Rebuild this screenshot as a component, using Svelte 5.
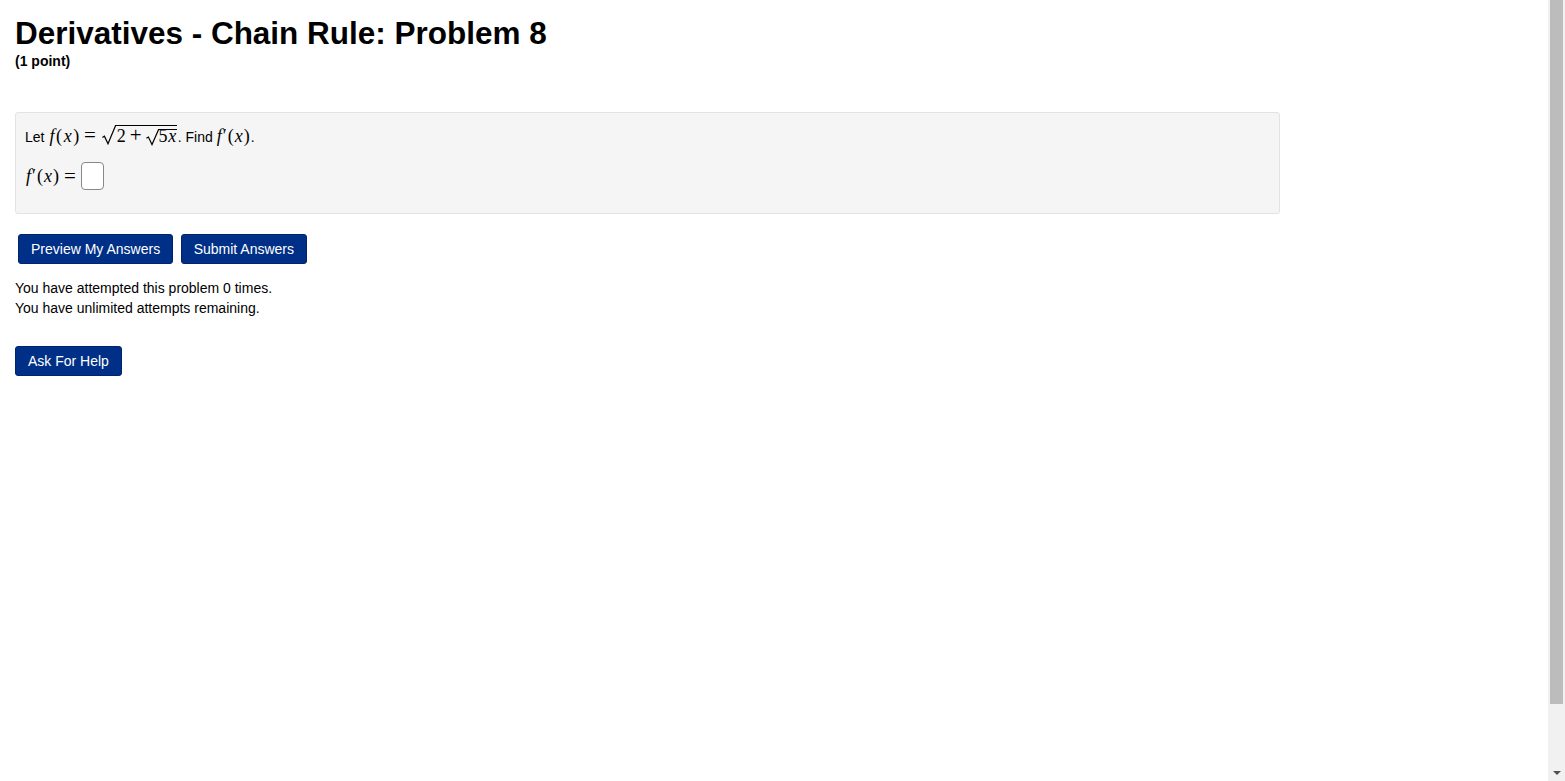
<script>
  const attempts = 0;
</script>

<div class="page">
  <h1>Derivatives - Chain Rule: Problem 8</h1>
  <div class="points">(1 point)</div>

  <div class="problem">
    <p class="line">
      <span class="word">Let</span><span class="math fx"><i>f</i>(<i>x</i>)</span><span class="math eq">=</span><span class="math root outer"><svg viewBox="0 0 15 21" class="radical"><path d="M0.4 12.4 L2.4 11.2 L6 18.8 L13.6 0.5 L15 0.5" fill="none" stroke="#000" stroke-width="1.2" /></svg><span class="under">2<span class="plus">+</span><span class="root inner"><svg viewBox="0 0 14 17" class="radical small"><path d="M0.4 9.2 L2.4 8 L6 15.6 L12.6 0.5 L14 0.5" fill="none" stroke="#000" stroke-width="1.2" /></svg><span class="under">5<i>x</i></span></span></span></span><span class="word find">. Find</span><span class="math fx prime"><i>f</i>′(<i>x</i>)</span><span class="word">.</span>
    </p>
    <div class="answer">
      <span class="math fx prime"><i>f</i>′(<i>x</i>)</span><span class="math eq tight">=</span>
      <input class="box" type="text" aria-label="answer" />
    </div>
  </div>

  <div class="actions">
    <button>Preview My Answers</button>
    <button class="submit">Submit Answers</button>
  </div>

  <div class="status">
    You have attempted this problem {attempts} times.<br />
    You have unlimited attempts remaining.
  </div>

  <button class="help">Ask For Help</button>
</div>

<div class="scrollbar">
  <div class="thumb"></div>
  <div class="arrow"></div>
</div>

<style>
  :global(body) {
    margin: 0;
    background: #fff;
    color: #000;
    font-family: "Liberation Sans", Arial, sans-serif;
    font-size: 14px;
    overflow: hidden;
  }
  .page {
    padding: 16px 0 0 15px;
    width: 1265px;
  }
  h1 {
    margin: 0;
    font-size: 31.48px;
    line-height: 36px;
    font-weight: bold;
  }
  .points {
    font-size: 14px;
    font-weight: bold;
    line-height: 16px;
    margin-top: 1px;
  }
  .problem {
    margin-top: 43px;
    height: 100px;
    background: #f5f5f5;
    border: 1px solid #e3e3e3;
    border-radius: 3px;
    padding: 0 0 0 9px;
  }
  .line {
    margin: 7px 0 0;
    height: 30px;
    line-height: 30px;
    display: flex;
    align-items: baseline;
    white-space: nowrap;
  }
  .word {
    font-size: 14px;
  }
  .find {
    margin-left: 1px;
  }
  .math {
    font-family: "Liberation Serif", "Times New Roman", serif;
    font-size: 18px;
  }
  .fx {
    margin-left: 5px;
    letter-spacing: 1.6px;
  }
  .prime {
    margin-left: 4px;
    letter-spacing: 1px;
  }
  .eq {
    font-size: 21px;
    margin: 0 6px 0 3px;
  }
  .eq.tight {
    margin: 0 5px 0 4px;
  }
  .plus {
    font-size: 21px;
    margin: 0 4px;
  }
  .root {
    display: inline-block;
    position: relative;
    padding-left: 15px;
    line-height: 19px;
  }
  .inner {
    padding-left: 13px;
    line-height: 12px;
  }
  .radical {
    position: absolute;
    left: 0;
    top: 0;
    width: 15px;
    height: 21px;
  }
  .radical.small {
    width: 14px;
    height: 17px;
  }
  .under {
    display: inline-block;
    border-top: 1.2px solid #000;
    line-height: 19px;
  }
  .inner .under {
    line-height: 12px;
    letter-spacing: 0.6px;
  }
  .answer {
    display: flex;
    align-items: center;
    margin-top: 12px;
    margin-left: -4px;
    padding-left: 1px;
  }
  .box {
    width: 23px;
    height: 28px;
    box-sizing: border-box;
    padding: 0;
    margin: 0;
    background: #fff;
    border: 1px solid #888;
    border-radius: 4px;
  }
  .actions {
    display: flex;
    gap: 8px;
    margin: 20px 0 0 3px;
  }
  button {
    height: 30px;
    padding: 0 12px;
    font-family: inherit;
    font-size: 14px;
    color: #fff;
    background: #002f87;
    border: 1px solid #00256b;
    border-radius: 3px;
  }
  .submit {
    padding: 0 11.5px;
  }
  .status {
    margin-top: 14px;
    line-height: 20px;
  }
  .help {
    display: block;
    margin-top: 28px;
  }
  .scrollbar {
    position: fixed;
    top: 0;
    right: 0;
    width: 17px;
    height: 781px;
    background: #f1f1f1;
  }
  .thumb {
    width: 13px;
    height: 704px;
    margin-left: 2px;
    background: #bcbcbc;
  }
  .arrow {
    position: absolute;
    left: 5px;
    bottom: 6px;
    border-left: 4px solid transparent;
    border-right: 4px solid transparent;
    border-top: 4px solid #505050;
  }
</style>
